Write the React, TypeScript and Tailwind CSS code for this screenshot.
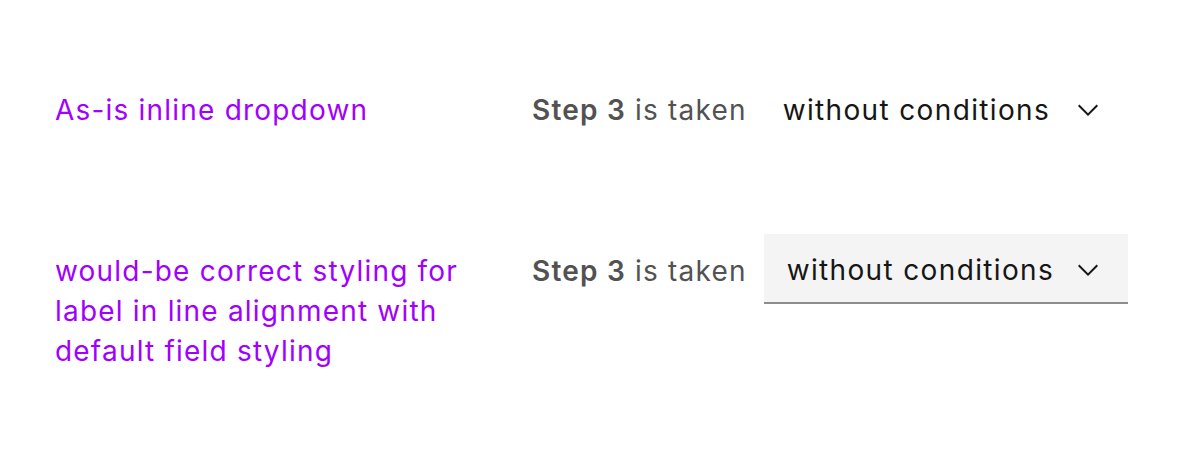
const FONT = "font-['Inter',sans-serif]";

function ChevronDown() {
  return (
    <svg width="32" height="32" viewBox="0 0 16 16" fill="#161616" aria-hidden="true">
      <path d="M8 11L3 6 3.7 5.3 8 9.6 12.3 5.3 13 6z" />
    </svg>
  );
}

function StepLabel({ className = '' }: { className?: string }) {
  return (
    <span className={`text-[28px] leading-[40px] tracking-[1.2px] text-[#525252] whitespace-nowrap ${className}`}>
      <span className="font-semibold">Step 3</span> is taken
    </span>
  );
}

export default function App() {
  return (
    <div className={`${FONT} w-[1200px] h-[474px] bg-white pl-[55px] pt-[90px]`}>
      {/* Row 1: current inline dropdown */}
      <div className="grid grid-cols-[477px_auto] items-center">
        <p className="text-[28px] leading-[40px] tracking-[1.2px] text-[#a100ff]">As-is inline dropdown</p>
        <div className="flex items-center">
          <StepLabel />
          <button
            type="button"
            className="ml-[17px] flex h-[40px] w-[354px] items-center justify-between pl-[19px] pr-[14px] text-[28px] tracking-[1.35px] text-[#161616]"
          >
            <span>without conditions</span>
            <ChevronDown />
          </button>
        </div>
      </div>

      {/* Row 2: proposed styling */}
      <div className="mt-[104px] grid grid-cols-[477px_auto] items-start">
        <p className="mt-[17px] w-[420px] text-[28px] leading-[40px] tracking-[1.2px] text-[#a100ff]">
          would-be correct styling for label in line alignment with default field styling
        </p>
        <div className="flex items-center">
          <StepLabel className="pt-[4px]" />
          <button
            type="button"
            className="ml-[17px] flex h-[70px] w-[364px] items-center justify-between border-b-2 border-[#8d8d8d] bg-[#f4f4f4] pt-[4px] pl-[23px] pr-[24px] text-[28px] tracking-[1.35px] text-[#161616]"
          >
            <span>without conditions</span>
            <ChevronDown />
          </button>
        </div>
      </div>
    </div>
  );
}
